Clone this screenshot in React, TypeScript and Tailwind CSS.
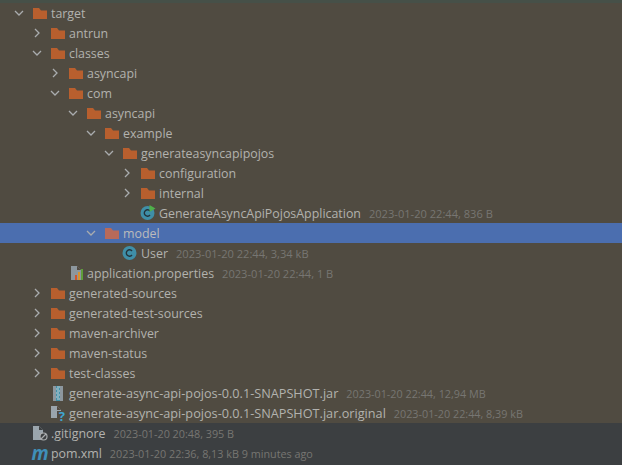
const font = "font-['Open_Sans','Noto_Sans',sans-serif]";

type Kind = "folder" | "run" | "class" | "props" | "jar" | "unknown" | "ignored" | "maven";
type Row = {
  depth: number;
  name: string;
  kind: Kind;
  arrow?: "open" | "closed";
  meta?: string;
  selected?: boolean;
  vcs?: boolean;
  wide?: boolean;
};

const rows: Row[] = [
  { depth: 0, name: "target", kind: "folder", arrow: "open" },
  { depth: 1, name: "antrun", kind: "folder", arrow: "closed" },
  { depth: 1, name: "classes", kind: "folder", arrow: "open" },
  { depth: 2, name: "asyncapi", kind: "folder", arrow: "closed" },
  { depth: 2, name: "com", kind: "folder", arrow: "open" },
  { depth: 3, name: "asyncapi", kind: "folder", arrow: "open" },
  { depth: 4, name: "example", kind: "folder", arrow: "open" },
  { depth: 5, name: "generateasyncapipojos", kind: "folder", arrow: "open" },
  { depth: 6, name: "configuration", kind: "folder", arrow: "closed" },
  { depth: 6, name: "internal", kind: "folder", arrow: "closed" },
  { depth: 6, name: "GenerateAsyncApiPojosApplication", kind: "run", meta: "2023-01-20 22:44, 836 B" },
  { depth: 4, name: "model", kind: "folder", arrow: "open", selected: true },
  { depth: 5, name: "User", kind: "class", meta: "2023-01-20 22:44, 3,34 kB" },
  { depth: 2, name: "application.properties", kind: "props", meta: "2023-01-20 22:44, 1 B" },
  { depth: 1, name: "generated-sources", kind: "folder", arrow: "closed" },
  { depth: 1, name: "generated-test-sources", kind: "folder", arrow: "closed" },
  { depth: 1, name: "maven-archiver", kind: "folder", arrow: "closed" },
  { depth: 1, name: "maven-status", kind: "folder", arrow: "closed" },
  { depth: 1, name: "test-classes", kind: "folder", arrow: "closed" },
  { depth: 1, name: "generate-async-api-pojos-0.0.1-SNAPSHOT.jar", kind: "jar", meta: "2023-01-20 22:44, 12,94 MB", wide: true },
  { depth: 1, name: "generate-async-api-pojos-0.0.1-SNAPSHOT.jar.original", kind: "unknown", meta: "2023-01-20 22:44, 8,39 kB", wide: true },
  { depth: 0, name: ".gitignore", kind: "ignored", meta: "2023-01-20 20:48, 395 B", vcs: true },
  { depth: 0, name: "pom.xml", kind: "maven", meta: "2023-01-20 22:36, 8,13 kB 9 minutes ago", vcs: true },
];

function Arrow({ dir }: { dir: "open" | "closed" }) {
  return (
    <svg width="10" height="10" viewBox="0 0 10 10" fill="none" stroke="#a9acae" strokeWidth="1.3">
      {dir === "open" ? <path d="M1 3l4 4 4-4" /> : <path d="M3 1l4 4-4 4" />}
    </svg>
  );
}

function Icon({ kind, selected }: { kind: Kind; selected?: boolean }) {
  if (kind === "folder")
    return (
      <svg width="14" height="11" viewBox="0 0 14 11">
        <path d="M0 0h6l2 2.500h6V11H0z" fill={selected ? "#b86a59" : "#b85f2e"} />
      </svg>
    );
  if (kind === "run" || kind === "class")
    return (
      <svg width="16" height="16" viewBox="0 0 16 16">
        <circle cx="7.500" cy="8" r="7" fill="#3f8fa8" />
        <path d="M10 6a3.200 3.200 0 1 0 0 4" fill="none" stroke="#23343c" strokeWidth="1.400" />
        {kind === "run" && <path d="M9.500 0l6 3.500-6 3.500z" fill="#4fb04a" />}
      </svg>
    );
  if (kind === "props")
    return (
      <svg width="16" height="16" viewBox="0 0 16 16" className="translate-x-[2px]">
        <path d="M1 1h6l4 4v10H1z" fill="#8d979e" />
        <path d="M7 1v4h4z" fill="#50483f" />
        <rect x="5" y="10" width="2" height="5" fill="#d2562c" />
        <rect x="8" y="7" width="2" height="8" fill="#d9922f" />
        <rect x="11" y="4" width="2" height="11" fill="#5f9e3a" />
      </svg>
    );
  if (kind === "jar")
    return (
      <svg width="10" height="15" viewBox="0 0 10 15">
        <rect width="10" height="15" fill="#8d979e" />
        <rect x="3" width="4" height="15" fill="#3f8fa8" />
        <path d="M4 1h3M3 3h3M4 5h3M3 7h3M4 9h3M3 11h3M4 13h3" stroke="#c7d0d4" strokeWidth="1" />
      </svg>
    );
  if (kind === "unknown")
    return (
      <span className="relative block h-4 w-4">
        <svg width="16" height="16" viewBox="0 0 16 16">
          <path d="M1 1h6l4 4v8H1z" fill="#9aa5ad" />
          <path d="M7 1v4h4z" fill="#50483f" />
          <rect x="7" y="6" width="8" height="10" fill="#504b41" />
        </svg>
        <span className={`absolute right-[1px] top-[3px] text-[13px] font-bold leading-4 text-[#3fa5d0] ${font}`}>?</span>
      </span>
    );
  if (kind === "ignored")
    return (
      <svg width="16" height="16" viewBox="0 0 16 16">
        <path d="M1 1h6l4 4v10H1z" fill="#9aa5ad" />
        <path d="M7 1v4h4z" fill="#3c3f41" />
        <circle cx="11.500" cy="11.500" r="3.500" fill="#3c3f41" stroke="#a9acae" strokeWidth="1.200" />
        <path d="M9 14l5-5" stroke="#a9acae" strokeWidth="1.200" />
      </svg>
    );
  return <span className={`block text-[19px] font-bold italic leading-4 text-[#3f8fb8] ${font}`}>m</span>;
}

function TreeRow({ row }: { row: Row }) {
  const indent = 14 + row.depth * 18;
  const isFile = !row.arrow;
  const metaSize = row.wide || row.vcs ? "text-[10.8px]" : "text-[11.1px]";
  return (
    <div
      className={`flex h-5 items-center whitespace-nowrap ${row.selected ? "bg-[#4b6eaf]" : ""}`}
      style={{ paddingLeft: indent + (isFile ? 18 : 0) }}
    >
      {row.arrow && (
        <span className="mr-2 flex w-[10px] shrink-0 justify-center">
          <Arrow dir={row.arrow} />
        </span>
      )}
      <span className="mr-[3px] flex w-[16px] shrink-0 items-center justify-center">
        <Icon kind={row.kind} selected={row.selected} />
      </span>
      <span
        className={`translate-y-[1px] ${row.wide ? "text-[12.7px]" : "text-[12.4px]"} ${
          row.selected ? "text-[#bbbbbb]" : "text-[#b2b2ae]"
        }`}
      >
        {row.name}
      </span>
      {row.meta && <span className={`ml-2 translate-y-[1px] ${metaSize} text-[#777672]`}>{row.meta}</span>}
    </div>
  );
}

export default function App() {
  const warm = rows.filter((r) => !r.vcs);
  const plain = rows.filter((r) => r.vcs);
  return (
    <div className={`flex h-[465px] w-[622px] flex-col overflow-hidden bg-[#3c3f41] ${font}`}>
      <div className="h-[3px] bg-[#465048]" />
      <div className="bg-[#504b41]">
        {warm.map((r, i) => (
          <TreeRow key={i} row={r} />
        ))}
      </div>
      <div>
        {plain.map((r, i) => (
          <TreeRow key={i} row={r} />
        ))}
      </div>
    </div>
  );
}
